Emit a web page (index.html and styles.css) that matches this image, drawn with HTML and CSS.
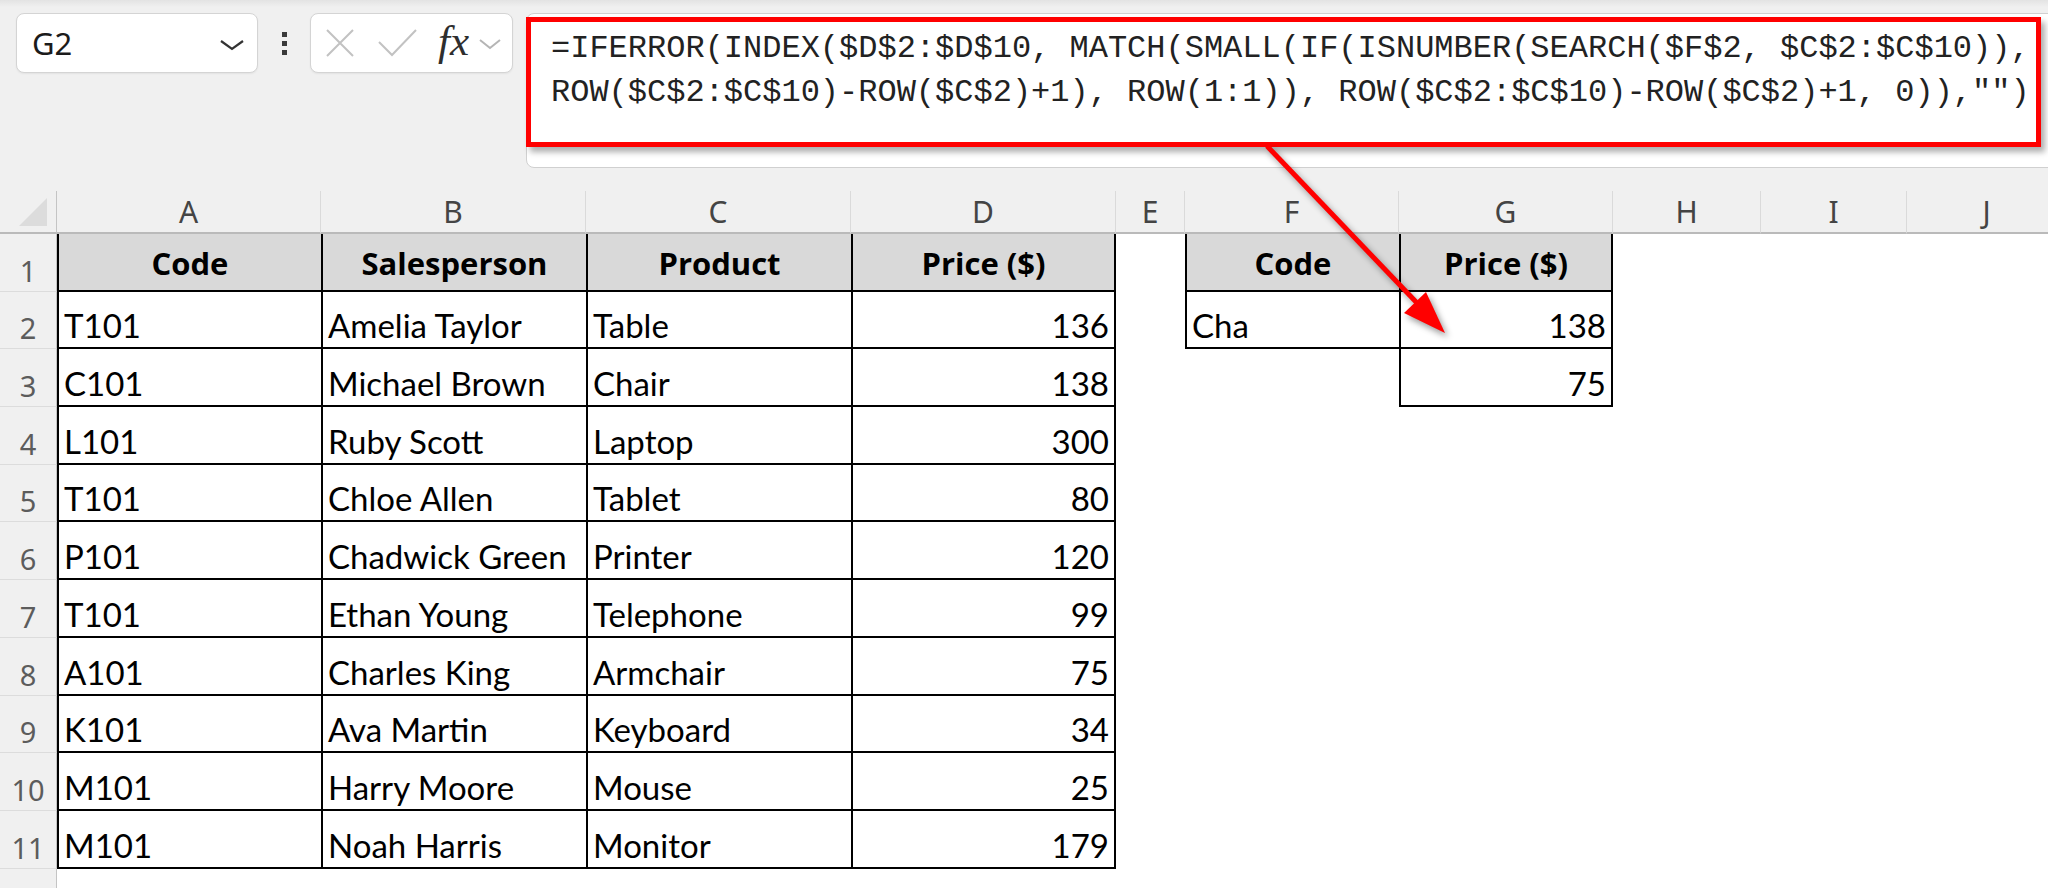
FILE: index.html
```html
<!DOCTYPE html>
<html lang="en">
<head>
<meta charset="utf-8">
<title>Excel – INDEX MATCH SMALL</title>
<link rel="stylesheet" href="styles.css">
</head>
<body>
<div class="app">
  <header class="fbar">
    <div class="namebox">
      <span class="nb-text">G2</span>
      <svg class="nb-chev" width="26" height="12" viewBox="0 0 26 12"><polyline points="2,2 13,10 24,2" fill="none" stroke="#333" stroke-width="2.2"/></svg>
    </div>
    <div class="grip"><i></i><i></i><i></i></div>
    <div class="fxbox">
      <svg class="ic-x" width="30" height="30" viewBox="0 0 30 30"><path d="M2 2L28 28M28 2L2 28" stroke="#c2c2c2" stroke-width="2"/></svg>
      <svg class="ic-ok" width="40" height="28" viewBox="0 0 40 28"><polyline points="1,13 14,26 38,1" fill="none" stroke="#c2c2c2" stroke-width="2"/></svg>
      <span class="fx">fx</span>
      <svg class="ic-chev" width="24" height="14" viewBox="0 0 24 14"><polyline points="2,3 12,11 22,3" fill="none" stroke="#b5b5b5" stroke-width="2"/></svg>
    </div>
    <div class="formula">
      <div class="ftext">=IFERROR(INDEX($D$2:$D$10, MATCH(SMALL(IF(ISNUMBER(SEARCH($F$2, $C$2:$C$10)),
ROW($C$2:$C$10)-ROW($C$2)+1), ROW(1:1)), ROW($C$2:$C$10)-ROW($C$2)+1, 0)),"")</div>
    </div>
  </header>

  <main class="sheet">
    <div class="corner"></div>
    <div class="ch">A</div><div class="ch">B</div><div class="ch">C</div><div class="ch">D</div><div class="ch">E</div><div class="ch">F</div><div class="ch">G</div><div class="ch">H</div><div class="ch">I</div><div class="ch">J</div>

    <div class="rh">1</div>
    <div class="c t h">Code</div><div class="c t h">Salesperson</div><div class="c t h">Product</div><div class="c t h r">Price ($)</div>
    <div class="c"></div><div class="c t h">Code</div><div class="c t h r">Price ($)</div><div class="c"></div><div class="c"></div><div class="c"></div>

    <div class="rh">2</div>
    <div class="c t">T101</div><div class="c t">Amelia Taylor</div><div class="c t">Table</div><div class="c t r n">136</div>
    <div class="c"></div><div class="c t">Cha</div><div class="c t r n">138</div><div class="c"></div><div class="c"></div><div class="c"></div>

    <div class="rh">3</div>
    <div class="c t">C101</div><div class="c t">Michael Brown</div><div class="c t">Chair</div><div class="c t r n">138</div>
    <div class="c"></div><div class="c"></div><div class="c t r n">75</div><div class="c"></div><div class="c"></div><div class="c"></div>

    <div class="rh">4</div>
    <div class="c t">L101</div><div class="c t">Ruby Scott</div><div class="c t">Laptop</div><div class="c t r n">300</div>
    <div class="c"></div><div class="c"></div><div class="c"></div><div class="c"></div><div class="c"></div><div class="c"></div>

    <div class="rh">5</div>
    <div class="c t">T101</div><div class="c t">Chloe Allen</div><div class="c t">Tablet</div><div class="c t r n">80</div>
    <div class="c"></div><div class="c"></div><div class="c"></div><div class="c"></div><div class="c"></div><div class="c"></div>

    <div class="rh">6</div>
    <div class="c t">P101</div><div class="c t">Chadwick Green</div><div class="c t">Printer</div><div class="c t r n">120</div>
    <div class="c"></div><div class="c"></div><div class="c"></div><div class="c"></div><div class="c"></div><div class="c"></div>

    <div class="rh">7</div>
    <div class="c t">T101</div><div class="c t">Ethan Young</div><div class="c t">Telephone</div><div class="c t r n">99</div>
    <div class="c"></div><div class="c"></div><div class="c"></div><div class="c"></div><div class="c"></div><div class="c"></div>

    <div class="rh">8</div>
    <div class="c t">A101</div><div class="c t">Charles King</div><div class="c t">Armchair</div><div class="c t r n">75</div>
    <div class="c"></div><div class="c"></div><div class="c"></div><div class="c"></div><div class="c"></div><div class="c"></div>

    <div class="rh">9</div>
    <div class="c t">K101</div><div class="c t">Ava Martin</div><div class="c t">Keyboard</div><div class="c t r n">34</div>
    <div class="c"></div><div class="c"></div><div class="c"></div><div class="c"></div><div class="c"></div><div class="c"></div>

    <div class="rh">10</div>
    <div class="c t">M101</div><div class="c t">Harry Moore</div><div class="c t">Mouse</div><div class="c t r n">25</div>
    <div class="c"></div><div class="c"></div><div class="c"></div><div class="c"></div><div class="c"></div><div class="c"></div>

    <div class="rh">11</div>
    <div class="c t">M101</div><div class="c t">Noah Harris</div><div class="c t">Monitor</div><div class="c t r n">179</div>
    <div class="c"></div><div class="c"></div><div class="c"></div><div class="c"></div><div class="c"></div><div class="c"></div>

    <div class="rh"></div>
    <div class="c"></div><div class="c"></div><div class="c"></div><div class="c"></div>
    <div class="c"></div><div class="c"></div><div class="c"></div><div class="c"></div><div class="c"></div><div class="c"></div>
  </main>

  <div class="highlight"></div>
  <svg class="arrow" width="2048" height="888" viewBox="0 0 2048 888">
    <g class="arrow-shape">
      <line x1="1267" y1="146" x2="1418" y2="304" stroke="#ff0000" stroke-width="5"/>
      <polygon points="1445,333 1404,313 1426,292" fill="#ff0000"/>
    </g>
  </svg>
</div>
</body>
</html>
```

FILE: styles.css
```css
html, body {
  margin: 0;
  padding: 0;
  height: 100%;
  overflow: hidden;
}

body {
  background: #f0f0f0 linear-gradient(#e3e3e3, #f0f0f0 7px) no-repeat;
  font-family: "Noto Sans", "Open Sans", sans-serif;
}

.app {
  position: relative;
  width: 2048px;
  height: 888px;
  overflow: hidden;
}

/* ---------- formula bar ---------- */
.fbar {
  display: flex;
  align-items: flex-start;
  height: 155px;
  padding: 13px 0 0 16px;
}

.namebox {
  box-sizing: border-box;
  width: 242px;
  height: 60px;
  flex: none;
  background: #fff;
  border: 1px solid #d4d4d4;
  border-radius: 8px;
  box-shadow: 0 1px 2px rgba(0, 0, 0, 0.06);
  display: flex;
  align-items: center;
  justify-content: space-between;
  padding: 0 12px 0 15px;
}

.nb-text {
  font-family: "Noto Sans", sans-serif;
  font-size: 31px;
  color: #1b1b1b;
}

.nb-chev {
  margin-top: 3px;
}

.grip {
  flex: none;
  display: flex;
  flex-direction: column;
  gap: 4px;
  width: 5px;
  margin: 19px 0 0 24px;
}

.grip i {
  display: block;
  width: 5px;
  height: 5px;
  background: #3a3a3a;
}

.fxbox {
  flex: none;
  box-sizing: border-box;
  width: 203px;
  height: 60px;
  margin-left: 23px;
  background: #fff;
  border: 1px solid #d4d4d4;
  border-radius: 8px;
  box-shadow: 0 1px 2px rgba(0, 0, 0, 0.06);
  display: flex;
  align-items: center;
  padding-left: 14px;
}

.ic-x {
  flex: none;
}

.ic-ok {
  flex: none;
  margin-left: 23px;
}

.fx {
  margin-left: 20px;
  font-family: "Liberation Serif", serif;
  font-style: italic;
  font-size: 43px;
  line-height: 40px;
  color: #2e2e2e;
  margin-top: -4px;
}

.ic-chev {
  flex: none;
  margin-left: 9px;
  margin-top: 2px;
}

.formula {
  flex: 1;
  box-sizing: border-box;
  height: 155px;
  margin: 0 -12px 0 13px;
  background: #fff;
  border: 1px solid #d0d0d0;
  border-radius: 8px;
  padding: 13px 0 0 24px;
}

.ftext {
  font-family: "Liberation Mono", "DejaVu Sans Mono", monospace;
  font-size: 32px;
  line-height: 44px;
  white-space: pre;
  color: #222;
}

/* ---------- annotation ---------- */
.highlight {
  position: absolute;
  left: 526px;
  top: 17px;
  width: 1515px;
  height: 130px;
  box-sizing: border-box;
  border: 5px solid #ff0000;
  box-shadow: 4px 5px 6px rgba(0, 0, 0, 0.32);
}

.arrow {
  position: absolute;
  left: 0;
  top: 0;
  pointer-events: none;
}

.arrow-shape {
  filter: drop-shadow(3px 4px 3px rgba(0, 0, 0, 0.4));
}

/* ---------- sheet ---------- */
.sheet {
  margin-top: 23px;
  display: grid;
  grid-template-columns: 57px 264px 265px 265px 265px 69px 214px 214px 148px 146px 160px;
  grid-template-rows: 43px repeat(12, 57.7px);
  background: #fff;
}

.corner {
  position: relative;
  background: #f0f0f0;
  border-right: 1px solid #c4c4c4;
  border-bottom: 2px solid #bababa;
}

.corner::after {
  content: "";
  position: absolute;
  right: 9px;
  bottom: 6px;
  width: 28px;
  height: 28px;
  background: #dcdcdc;
  clip-path: polygon(100% 0, 100% 100%, 0 100%);
}

.ch {
  background: #f0f0f0;
  border-right: 1px solid #dadada;
  border-bottom: 2px solid #bababa;
  display: flex;
  align-items: center;
  justify-content: center;
  font-family: "Noto Sans", sans-serif;
  font-size: 30px;
  line-height: 30px;
  color: #444;
}

.rh {
  box-sizing: border-box;
  background: #f0f0f0;
  border-right: 1px solid #c4c4c4;
  border-bottom: 1px solid #dcdcdc;
  display: flex;
  align-items: flex-end;
  justify-content: center;
  padding-bottom: 6px;
  font-family: "Noto Sans", sans-serif;
  font-size: 29px;
  line-height: 29px;
  color: #5c5c5c;
}

.c {
  box-sizing: border-box;
  min-width: 0;
  background: #fff;
  display: flex;
  align-items: flex-end;
  padding: 0 5px 5px 5px;
  font-family: Lato, "Open Sans", sans-serif;
  font-size: 33px;
  line-height: 33px;
  color: #000;
  white-space: nowrap;
  overflow: hidden;
}

.t {
  border-left: 2px solid #000;
  border-bottom: 2px solid #000;
}

.r {
  border-right: 2px solid #000;
}

.h {
  background: #d9d9d9;
  font-family: "Open Sans", Lato, sans-serif;
  font-weight: 700;
  font-size: 31px;
  justify-content: center;
  align-items: center;
  padding-top: 3px;
  padding-bottom: 0;
}

.n {
  justify-content: flex-end;
}
```
